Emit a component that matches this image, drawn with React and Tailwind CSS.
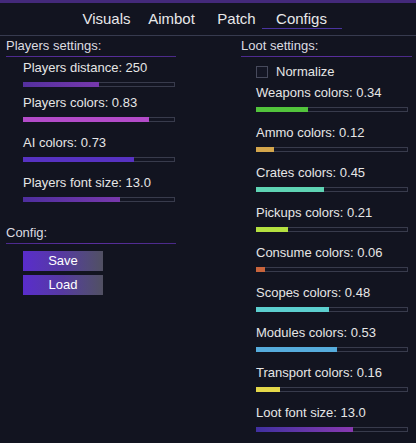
import { useState } from "react";

// tab names for the top bar
const TABS = ["Visuals", "Aimbot", "Patch", "Configs"];

const PLAYER_SLIDERS = [
  { label: "Players distance: 250", value: 0.5, fill: "bg-gradient-to-r from-[#55309f] to-[#7638ac]", gap: "mt-[3px]" },
  { label: "Players colors: 0.83", value: 0.83, fill: "bg-[#b34bc9]", gap: "mt-[8px]" },
  { label: "AI colors: 0.73", value: 0.73, fill: "bg-[#5732c2]", gap: "mt-[13px]" },
  { label: "Players font size: 13.0", value: 0.64, fill: "bg-gradient-to-r from-[#4e2e9e] to-[#7838ac]", gap: "mt-[13px]" },
];

const LOOT_SLIDERS = [
  { label: "Weapons colors: 0.34", value: 0.34, fill: "bg-[#52c43c]" },
  { label: "Ammo colors: 0.12", value: 0.12, fill: "bg-[#d4a64c]" },
  { label: "Crates colors: 0.45", value: 0.45, fill: "bg-[#5fd4b4]" },
  { label: "Pickups colors: 0.21", value: 0.21, fill: "bg-[#b4e040]" },
  { label: "Consume colors: 0.06", value: 0.06, fill: "bg-[#c8643c]" },
  { label: "Scopes colors: 0.48", value: 0.48, fill: "bg-[#5ccfcf]" },
  { label: "Modules colors: 0.53", value: 0.53, fill: "bg-[#56acdc]" },
  { label: "Transport colors: 0.16", value: 0.16, fill: "bg-[#e4d84a]" },
  { label: "Loot font size: 13.0", value: 0.64, fill: "bg-gradient-to-r from-[#4030a0] to-[#8838b0]" },
];

// Slider row: label + thin track
function Slider({ label, value, fill, gap }) {
  return (
    <div className={gap}>
      <p className="h-[15px] leading-[15px] text-[13px] text-[#e6e6e6]">{label}</p>
      <div className="mt-[7px] flex h-[5px] w-[152px] border border-[#383b4c] bg-[#131522]">
        <div
          className={`-my-px -ml-px h-[5px] ${fill}`}
          style={{ width: `${value * 152}px` }}
        />
      </div>
    </div>
  );
}

// Section header with purple line
function Header({ title, className }) {
  return (
    <div className={className}>
      <p className="h-[15px] leading-[15px] text-[13px] text-[#dcdce0]">{title}</p>
      <div className="mt-[3px] h-px bg-gradient-to-r from-[#4c2a8e] via-[#5a2e9e] to-[#4a2a88]" />
    </div>
  );
}

function Button({ children, className }) {
  return (
    <button
      className={`flex h-[20px] w-[80px] items-center justify-center bg-gradient-to-r from-[#5a2ccc] via-[#56399f] to-[#515062] text-[13px] text-white ${className}`}
    >
      {children}
    </button>
  );
}

export default function App() {
  const [tab, setTab] = useState("Configs");
  const [normalize, setNormalize] = useState(false);

  return (
    <div className="h-[443px] w-[416px] overflow-hidden bg-[#121420] font-['Liberation_Sans',Arial,sans-serif] text-[#e6e6e6]">
      {/* top bar */}
      <div className="h-[3px] bg-[#43297a]" />

      {/* tabs */}
      <div className="flex h-[32px] justify-center pr-[8px] pt-[7px]">
        {TABS.map((t) => (
          <div
            key={t}
            onClick={() => setTab(t)}
            className="flex w-[65px] cursor-pointer flex-col items-center"
          >
            <span className="h-[17px] leading-[17px] text-[15px] text-[#e8e8ea]">{t}</span>
            <div
              className={`mt-px h-px w-[80px] shrink-0 ${
                tab === t ? "bg-[#4a34a0]" : "bg-transparent"
              }`}
            />
          </div>
        ))}
      </div>
      <div className="h-px bg-[#373b4f]" />

      <div className="flex pl-[6px]">
        {/* Players column */}
        <div className="w-[170px]">
          <Header title="Players settings:" className="mt-[2px]" />
          <div className="pl-[17px]">
            {PLAYER_SLIDERS.map((s) => (
              <Slider key={s.label} {...s} />
            ))}
          </div>

          <Header title="Config:" className="mt-[23px]" />
          <div className="mt-[7px] flex flex-col gap-[4px] pl-[17px]">
            <Button>Save</Button>
            <Button>Load</Button>
          </div>
        </div>

        {/* Loot column */}
        <div className="ml-[65px] w-[171px]">
          <Header title="Loot settings:" className="mt-[2px]" />
          <div className="pl-[15px]">
            <label className="mt-[7px] flex h-[15px] cursor-pointer items-center">
              <span
                onClick={() => setNormalize(!normalize)}
                className={`h-[12px] w-[12px] border border-[#474a5c] ${
                  normalize ? "bg-[#5a2ccc]" : "bg-[#141624]"
                }`}
              />
              <span className="ml-[8px] leading-[15px] text-[13px]">Normalize</span>
            </label>
            {LOOT_SLIDERS.map((s, i) => (
              <Slider key={s.label} {...s} gap={i === 0 ? "mt-[6px]" : "mt-[13px]"} />
            ))}
          </div>
        </div>
      </div>
    </div>
  );
}
